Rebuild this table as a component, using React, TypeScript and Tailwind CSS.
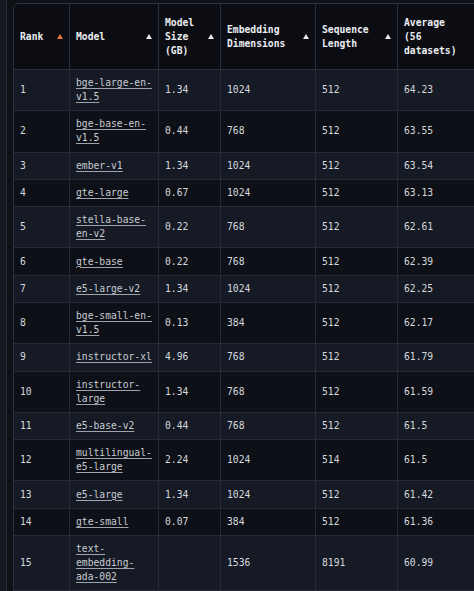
import React from "react";

type Row = {
  rank: number;
  model: string;
  size: string;
  dims: string;
  seq: string;
  avg: string;
};

const rows: Row[] = [
  { rank: 1, model: "bge-large-en-v1.5", size: "1.34", dims: "1024", seq: "512", avg: "64.23" },
  { rank: 2, model: "bge-base-en-v1.5", size: "0.44", dims: "768", seq: "512", avg: "63.55" },
  { rank: 3, model: "ember-v1", size: "1.34", dims: "1024", seq: "512", avg: "63.54" },
  { rank: 4, model: "gte-large", size: "0.67", dims: "1024", seq: "512", avg: "63.13" },
  { rank: 5, model: "stella-base-en-v2", size: "0.22", dims: "768", seq: "512", avg: "62.61" },
  { rank: 6, model: "gte-base", size: "0.22", dims: "768", seq: "512", avg: "62.39" },
  { rank: 7, model: "e5-large-v2", size: "1.34", dims: "1024", seq: "512", avg: "62.25" },
  { rank: 8, model: "bge-small-en-v1.5", size: "0.13", dims: "384", seq: "512", avg: "62.17" },
  { rank: 9, model: "instructor-xl", size: "4.96", dims: "768", seq: "512", avg: "61.79" },
  { rank: 10, model: "instructor-large", size: "1.34", dims: "768", seq: "512", avg: "61.59" },
  { rank: 11, model: "e5-base-v2", size: "0.44", dims: "768", seq: "512", avg: "61.5" },
  { rank: 12, model: "multilingual-e5-large", size: "2.24", dims: "1024", seq: "514", avg: "61.5" },
  { rank: 13, model: "e5-large", size: "1.34", dims: "1024", seq: "512", avg: "61.42" },
  { rank: 14, model: "gte-small", size: "0.07", dims: "384", seq: "512", avg: "61.36" },
  { rank: 15, model: "text-embedding-ada-002", size: "", dims: "1536", seq: "8191", avg: "60.99" },
];

// breaks model names after the hyphen the way the original column wraps
const modelLines: Record<string, string[]> = {
  "bge-large-en-v1.5": ["bge-large-en-", "v1.5"],
  "bge-base-en-v1.5": ["bge-base-en-", "v1.5"],
  "stella-base-en-v2": ["stella-base-", "en-v2"],
  "bge-small-en-v1.5": ["bge-small-en-", "v1.5"],
  "instructor-large": ["instructor-", "large"],
  "multilingual-e5-large": ["multilingual-", "e5-large"],
  "text-embedding-ada-002": ["text-", "embedding-", "ada-002"],
};

function SortArrow({ active }: { active?: boolean }) {
  return (
    <svg width="6" height="5" viewBox="0 0 6 5" className="shrink-0">
      <path d="M3 0 L6 5 L0 5 Z" fill={active ? "#e2773c" : "#e6e8ec"} />
    </svg>
  );
}

function HeadCell({
  lines,
  active,
  labelW,
}: {
  lines: string[];
  active?: boolean;
  labelW: string;
}) {
  return (
    <div className="flex items-center justify-between gap-1 border-r border-b border-[#2a2f39] bg-[#0b0d12] px-[6px] py-[11.5px]">
      <div className={`${labelW} font-bold leading-[14px] text-[#eceef2]`}>
        {lines.map((l) => (
          <div key={l}>{l}</div>
        ))}
      </div>
      <SortArrow active={active} />
    </div>
  );
}

export default function App() {
  return (
    <div
      className="flex h-[591px] w-[474px] overflow-hidden bg-[#15181f] text-[9.7px]"
      style={{ fontFamily: '"DejaVu Sans Mono", "Liberation Mono", monospace' }}
    >
      <div className="w-[6px] shrink-0" />
      <div className="flex-1 border-l border-[#2a2e36] bg-[#0e1116] pl-[6px] pt-[3px]">
        <div className="w-[520px] overflow-hidden rounded-tl-[6px] border-t border-l border-[#2c313b]">
          <div className="grid grid-cols-[56px_89px_62px_95px_82px_136px]">
            <HeadCell lines={["Rank"]} active labelW="w-auto" />
            <HeadCell lines={["Model"]} labelW="w-auto" />
            <HeadCell lines={["Model", "Size", "(GB)"]} labelW="w-[38px]" />
            <HeadCell lines={["Embedding", "Dimensions"]} labelW="w-[64px]" />
            <HeadCell lines={["Sequence", "Length"]} labelW="w-[50px]" />
            <HeadCell lines={["Average", "(56", "datasets)"]} labelW="w-[100px]" />

            {rows.map((r, i) => {
              const bg = i % 2 === 0 ? "bg-[#151a24]" : "bg-[#0d1016]";
              const cell = `${bg} border-r border-b border-[#262b35] px-[6px] py-[6.15px] leading-[14px] text-[#d6d9de] flex items-center`;
              const lines = modelLines[r.model] ?? [r.model];
              return (
                <React.Fragment key={r.rank}>
                  <div className={cell}>{r.rank}</div>
                  <div className={cell}>
                    <div>
                      {lines.map((l) => (
                        <div key={l}>
                          <span className="text-[#c9ccd3] underline decoration-[#9ea3ad] underline-offset-2">
                            {l}
                          </span>
                        </div>
                      ))}
                    </div>
                  </div>
                  <div className={cell}>{r.size}</div>
                  <div className={cell}>{r.dims}</div>
                  <div className={cell}>{r.seq}</div>
                  <div className={cell}>{r.avg}</div>
                </React.Fragment>
              );
            })}
          </div>
        </div>
      </div>
    </div>
  );
}
